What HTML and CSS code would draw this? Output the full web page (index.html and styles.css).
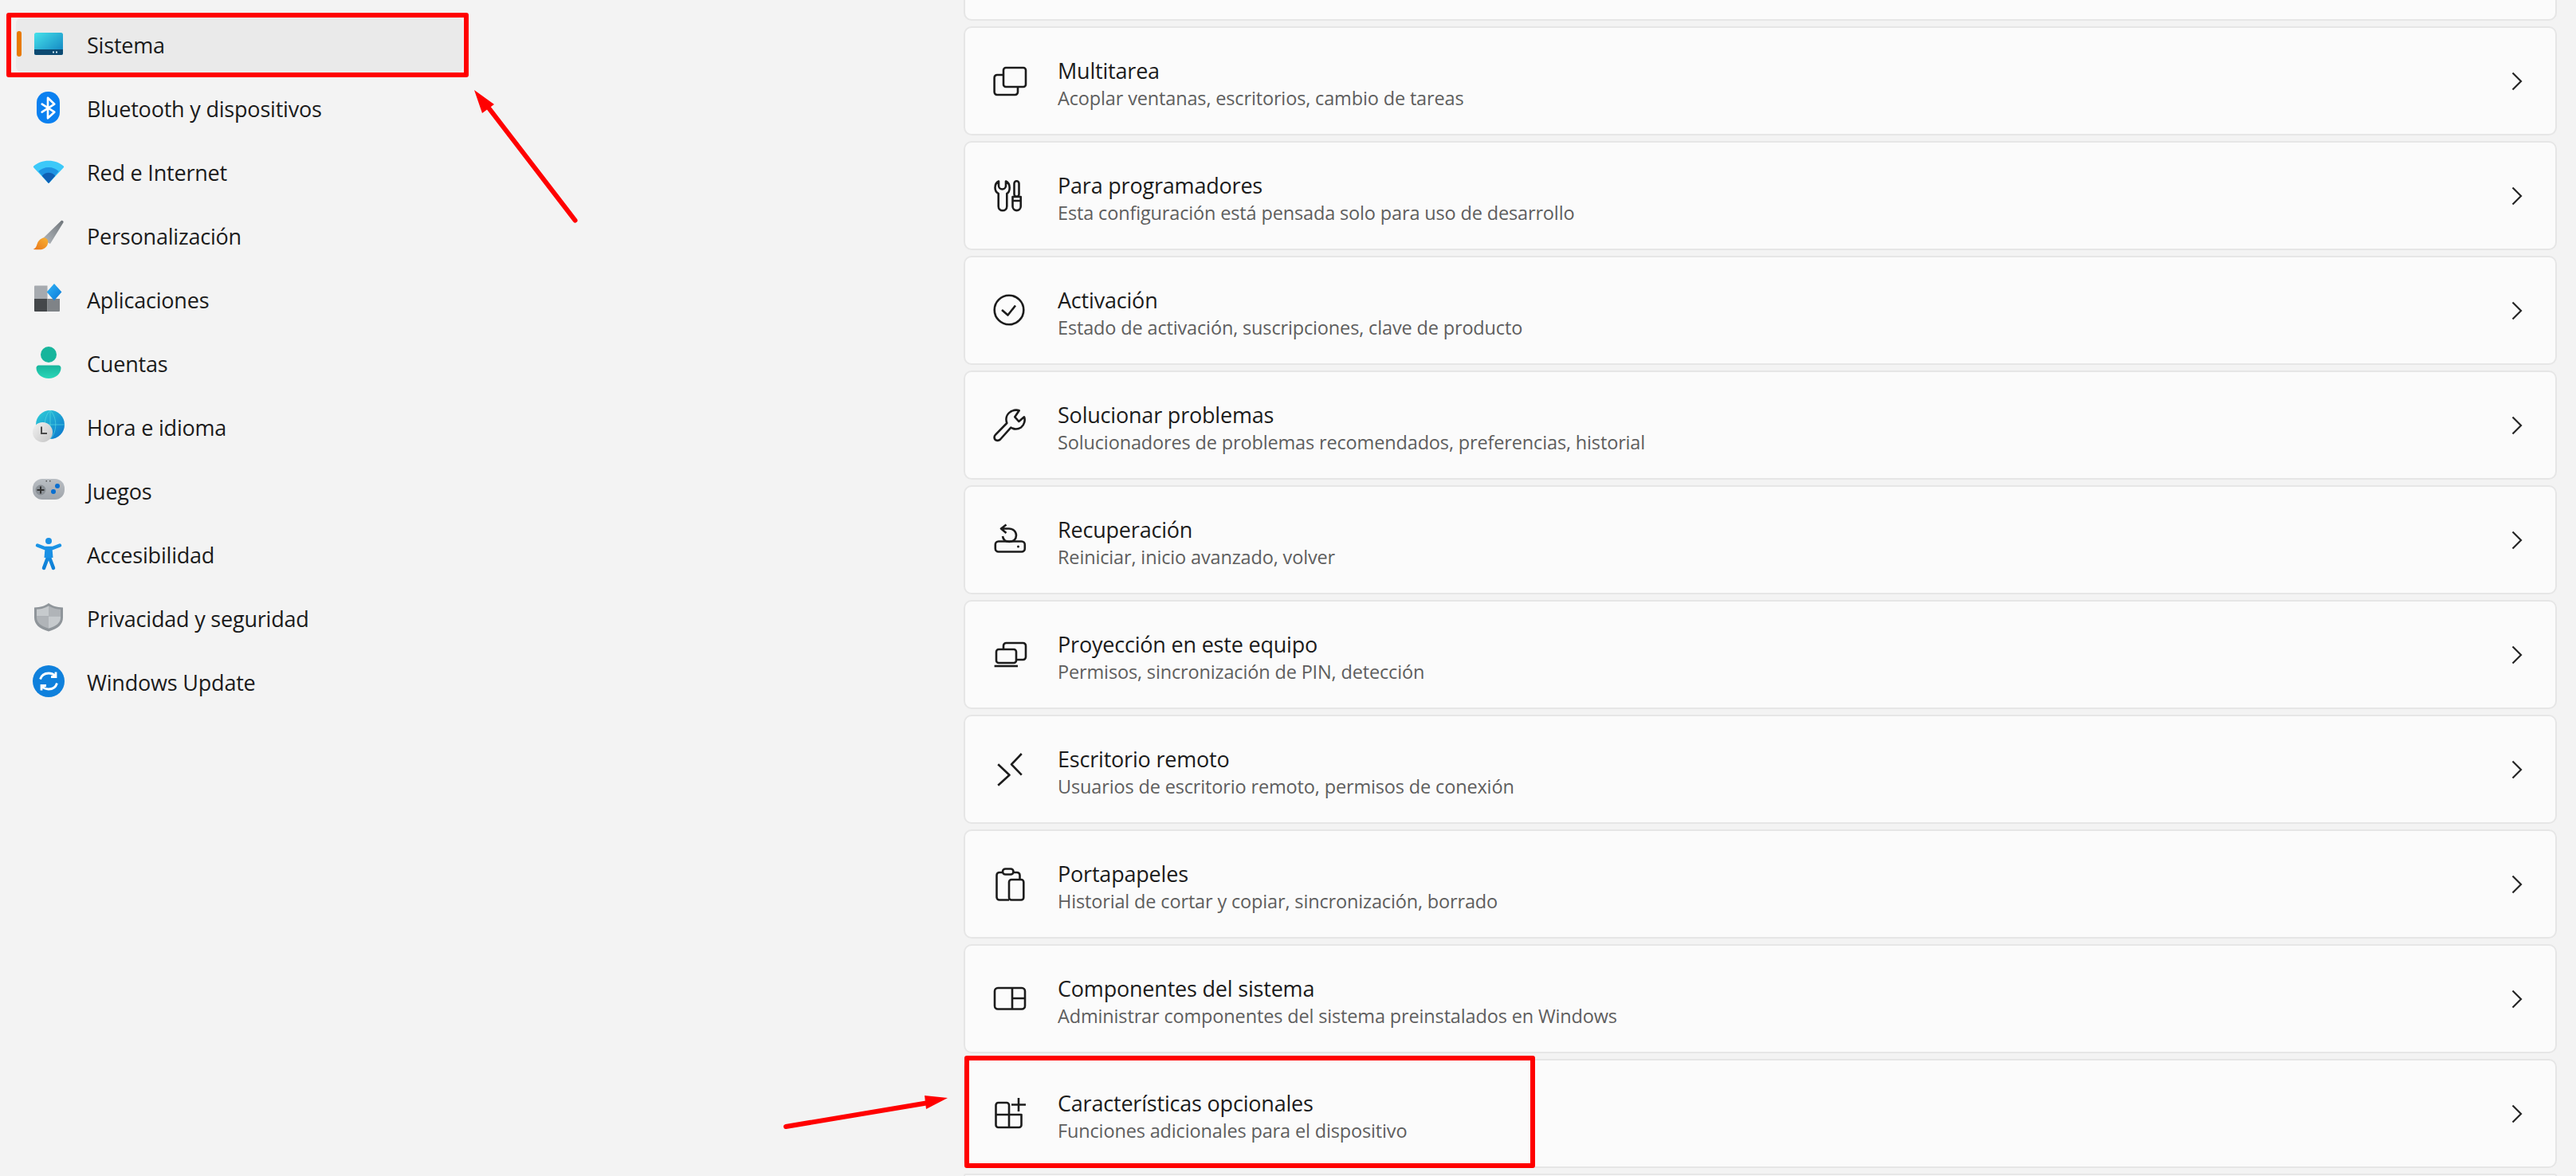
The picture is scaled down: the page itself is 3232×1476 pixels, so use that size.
FILE: index.html
```html
<!DOCTYPE html>
<html lang="es">
<head>
<meta charset="utf-8">
<title>Configuración - Sistema</title>
<link rel="stylesheet" href="styles.css">
</head>
<body>
<svg class="defs" width="0" height="0" aria-hidden="true">
  <defs>
    <linearGradient id="gSys" x1="0" y1="0" x2="1" y2="1"><stop offset="0" stop-color="#46e2ea"/><stop offset="1" stop-color="#0f7fc0"/></linearGradient>
    <linearGradient id="gTeal" x1="0" y1="0" x2="0" y2="1"><stop offset="0" stop-color="#17b59c"/><stop offset="1" stop-color="#2ad6b8"/></linearGradient>
    <linearGradient id="gGlobe" x1="0" y1="0" x2="1" y2="1"><stop offset="0" stop-color="#2fd0d8"/><stop offset="1" stop-color="#0a72cc"/></linearGradient>
    <linearGradient id="gPad" x1="0" y1="0" x2="0" y2="1"><stop offset="0" stop-color="#b9bec3"/><stop offset="1" stop-color="#a0a5ab"/></linearGradient>
    <linearGradient id="gHandle" x1="1" y1="0" x2="0" y2="1"><stop offset="0" stop-color="#6f757a"/><stop offset="1" stop-color="#b5babf"/></linearGradient>
    <linearGradient id="gBrush" x1="1" y1="0" x2="0" y2="1"><stop offset="0" stop-color="#f9b233"/><stop offset="1" stop-color="#e8751a"/></linearGradient>
    <linearGradient id="gDiamond" x1="0" y1="0" x2="1" y2="1"><stop offset="0" stop-color="#30b4f6"/><stop offset="1" stop-color="#0a78d8"/></linearGradient>
    <linearGradient id="gClock" x1="0" y1="0" x2="1" y2="1"><stop offset="0" stop-color="#f2f2f2"/><stop offset="1" stop-color="#c4c4c4"/></linearGradient>
    <linearGradient id="gBlue" x1="0" y1="0" x2="0" y2="1"><stop offset="0" stop-color="#1a94e6"/><stop offset="1" stop-color="#0f7fd6"/></linearGradient>
  </defs>
</svg>

<nav class="sidebar">
  <a class="nav-item active">
    <span class="accent"></span>
    <svg class="nav-icon" viewBox="0 0 44 44"><rect x="4" y="6" width="36" height="28" rx="2.500" fill="url(#gSys)"/><path d="M4 27h36v4.500a2.500 2.500 0 0 1-2.500 2.500h-31A2.500 2.500 0 0 1 4 31.500z" fill="#0c4a72"/><rect x="27" y="29.500" width="2" height="2" fill="#cfe6f2"/><rect x="31" y="29.500" width="2" height="2" fill="#cfe6f2"/></svg>
    <span class="nav-label">Sistema</span>
  </a>
  <a class="nav-item">
    <svg class="nav-icon" viewBox="0 0 44 44"><rect x="7" y="0" width="29" height="40" rx="14" fill="#0a80f0"/><path d="M13.700 15.700L29.300 25.700 21 33.300V7.700L29.300 15.700 13.700 25.700" fill="none" stroke="#fff" stroke-width="2.600" stroke-linejoin="round" stroke-linecap="round"/></svg>
    <span class="nav-label">Bluetooth y dispositivos</span>
  </a>
  <a class="nav-item">
    <svg class="nav-icon" viewBox="0 0 44 44"><path d="M3.200 13.500C8 9.200 14.500 6.700 22 6.700s14 2.500 18.800 6.800c.5.500.5 1.200 0 1.700L22.800 34.600c-.5.500-1.100.5-1.600 0L3.200 15.200c-.5-.5-.5-1.200 0-1.700z" fill="#3cc9f9"/><path d="M9.300 20C12.500 17 17 15 22 15s9.500 2 12.700 5L22 35z" fill="#1e93e2"/><path d="M13.700 25.700C15.800 23.200 18.700 21.700 22 21.700s6.200 1.500 8.300 4L22 35z" fill="#0f5fb4"/></svg>
    <span class="nav-label">Red e Internet</span>
  </a>
  <a class="nav-item">
    <svg class="nav-icon" viewBox="0 0 44 44"><path d="M37.500 2.200c1.300-1.300 3.800.200 3 2L24 31 13.500 25.500z" fill="url(#gHandle)"/><path d="M14 24c4-1.500 8 1.500 7.200 6-.8 5-5 8.300-10.500 8.300-3 0-5.700-.1-8-.4 3-1.200 3.800-3 4.800-6.400 1-3.500 3.200-6.300 6.500-7.500z" fill="url(#gBrush)"/></svg>
    <span class="nav-label">Personalización</span>
  </a>
  <a class="nav-item">
    <svg class="nav-icon" viewBox="0 0 44 44"><path d="M5 3.500h15.500V20H4V4.500a1 1 0 0 1 1-1z" fill="#a6aaaf"/><path d="M4 20h16.500v16H5a1 1 0 0 1-1-1z" fill="#44474a"/><path d="M20.500 20H36v15a1 1 0 0 1-1 1H20.500z" fill="#7f8387"/><path d="M29 1l9.400 10.500L29 22.300l-9.300-10.800z" fill="url(#gDiamond)"/></svg>
    <span class="nav-label">Aplicaciones</span>
  </a>
  <a class="nav-item">
    <svg class="nav-icon" viewBox="0 0 44 44"><circle cx="22" cy="10" r="10" fill="#17b59c"/><path d="M9.500 23.500h25c1.500 0 3 1.400 3 3.200 0 7.500-7 13.300-15.500 13.300S6.500 34.200 6.500 26.700c0-1.800 1.500-3.200 3-3.200z" fill="url(#gTeal)"/></svg>
    <span class="nav-label">Cuentas</span>
  </a>
  <a class="nav-item">
    <svg class="nav-icon" viewBox="0 0 44 44"><circle cx="24" cy="18" r="18" fill="url(#gGlobe)"/><path d="M6 18h36M24 0v36M24 0c-9 9-9 27 0 36M24 0c9 9 9 27 0 36" fill="none" stroke="#5fdde6" stroke-width="1" opacity=".6"/><circle cx="14.500" cy="27.500" r="12.500" fill="url(#gClock)"/><path d="M13 20.500V29h7" fill="none" stroke="#4a4a4a" stroke-width="2"/></svg>
    <span class="nav-label">Hora e idioma</span>
  </a>
  <a class="nav-item">
    <svg class="nav-icon" viewBox="0 0 44 44"><rect x="2" y="6" width="40" height="26" rx="12" fill="url(#gPad)"/><circle cx="12" cy="20" r="6.500" fill="#8a9096"/><path d="M12 15.500v9M7.500 20h9" stroke="#333" stroke-width="2"/><circle cx="33" cy="15" r="3" fill="#0a6fd0"/><circle cx="28" cy="22" r="3" fill="#0a6fd0"/><rect x="18.500" y="8" width="1.500" height="1.500" fill="#555"/><rect x="23" y="8" width="1.500" height="1.500" fill="#555"/></svg>
    <span class="nav-label">Juegos</span>
  </a>
  <a class="nav-item">
    <svg class="nav-icon" viewBox="0 0 44 44"><circle cx="22" cy="4" r="4" fill="#1a90e4"/><path d="M8 9.500l9 3.500h10l9-3.500M22 13v12M22 22l-6 16M22 22l6 16" fill="none" stroke="url(#gBlue)" stroke-width="4.500" stroke-linecap="round" stroke-linejoin="round"/><path d="M17.500 13h9l1 12h-11z" fill="#1a90e4"/></svg>
    <span class="nav-label">Accesibilidad</span>
  </a>
  <a class="nav-item">
    <svg class="nav-icon" viewBox="0 0 44 44"><path d="M22 2c4.500 3.300 10 5.300 18 5.500V20c0 8.500-6 14-18 17.500C10 34 4 28.500 4 20V7.500C12 7.300 17.500 5.300 22 2z" fill="#8f959a"/><path d="M22 5.500v13H7V9.800c6-.3 11-1.800 15-4.300z" fill="#c6cacd"/><path d="M22 5.500c4 2.500 9 4 15 4.300v8.700H22z" fill="#b0b4b8"/><path d="M7 18.500h15v15.300c-10-3-15-7.500-15-13.800z" fill="#b0b4b8"/><path d="M22 18.500h15V20c0 6.300-5 10.800-15 13.800z" fill="#c6cacd"/></svg>
    <span class="nav-label">Privacidad y seguridad</span>
  </a>
  <a class="nav-item">
    <svg class="nav-icon" viewBox="0 0 44 44"><circle cx="22" cy="20" r="20" fill="#0f80dc"/><path d="M11.500 17.500C13 12.500 17 10 22 10c3.500 0 6.500 1.300 8.500 3.800M31 8.500v6h-6M32.500 22.500C31 27.500 27 30 22 30c-3.500 0-6.500-1.300-8.500-3.800M13 31.500v-6h6" fill="none" stroke="#fff" stroke-width="2.800"/></svg>
    <span class="nav-label">Windows Update</span>
  </a>
</nav>

<main class="content">
  <div class="card card-cut"></div>

  <a class="card">
    <svg class="card-icon" viewBox="0 0 44 44"><rect x="14" y="5" width="28" height="24" rx="3" /><path d="M14 14H6a3.400 3.400 0 0 0-3.400 3.400V35.600A3.400 3.400 0 0 0 6 39h22.600a3.400 3.400 0 0 0 3.400-3.400V29"/></svg>
    <div class="card-text"><div class="card-title">Multitarea</div><div class="card-sub">Acoplar ventanas, escritorios, cambio de tareas</div></div>
    <svg class="chevron" viewBox="0 0 14 24"><path d="M1.500 1.500L12 12 1.500 22.500"/></svg>
  </a>
  <a class="card">
    <svg class="card-icon" viewBox="0 0 44 44"><path d="M8 3.500C5 5 3.500 8 3.500 11.500 3.500 15 5 17.500 7.700 19V35a5.300 5.300 0 0 0 10.600 0V19C21 17.500 21.700 15 21.700 11.500 21.700 8 20 5 17 3.500V9a4.500 4.500 0 0 1-9 0z"/><rect x="27.500" y="3.200" width="6" height="19.500" rx="3"/><path d="M25.500 23h10.200v12a5.100 5.100 0 0 1-10.200 0zM25.500 28h10.200"/></svg>
    <div class="card-text"><div class="card-title">Para programadores</div><div class="card-sub">Esta configuración está pensada solo para uso de desarrollo</div></div>
    <svg class="chevron" viewBox="0 0 14 24"><path d="M1.500 1.500L12 12 1.500 22.500"/></svg>
  </a>
  <a class="card">
    <svg class="card-icon" viewBox="0 0 44 44"><circle cx="21" cy="21" r="18.300"/><path d="M12 21l7.500 6.500L29 15.500"/></svg>
    <div class="card-text"><div class="card-title">Activación</div><div class="card-sub">Estado de activación, suscripciones, clave de producto</div></div>
    <svg class="chevron" viewBox="0 0 14 24"><path d="M1.500 1.500L12 12 1.500 22.500"/></svg>
  </a>
  <a class="card">
    <svg class="card-icon" viewBox="0 0 44 44"><path d="M4 33.700L18.300 19C16.500 14 17.500 8 23.300 4.500 26.500 2.700 30.500 2.300 33.700 3.200L28.300 11.300 33.300 17 40 11.300C41.500 15 40.500 21 36 24.500 32 27 27.500 27 23.300 24.700L10 39.500C7.500 42 3 41 2.600 37.500 2.400 36 3 34.700 4 33.700z"/></svg>
    <div class="card-text"><div class="card-title">Solucionar problemas</div><div class="card-sub">Solucionadores de problemas recomendados, preferencias, historial</div></div>
    <svg class="chevron" viewBox="0 0 14 24"><path d="M1.500 1.500L12 12 1.500 22.500"/></svg>
  </a>
  <a class="card">
    <svg class="card-icon" viewBox="0 0 44 44"><rect x="3.800" y="23.500" width="37" height="13" rx="4"/><circle cx="32.500" cy="30" r="1.500" class="dot"/><path d="M17.500 2.500L11 7.500l6.500 5.500M11 7.500h10c5 0 9 3.500 9 8.500 0 4.500-3.500 8-8.500 8s-8-3-8.500-7"/></svg>
    <div class="card-text"><div class="card-title">Recuperación</div><div class="card-sub">Reiniciar, inicio avanzado, volver</div></div>
    <svg class="chevron" viewBox="0 0 14 24"><path d="M1.500 1.500L12 12 1.500 22.500"/></svg>
  </a>
  <a class="card">
    <svg class="card-icon" viewBox="0 0 44 44"><path d="M14 14V10.500A3.500 3.500 0 0 1 17.500 7H38.500A3.500 3.500 0 0 1 42 10.500V24.500A3.500 3.500 0 0 1 38.500 28H30"/><rect x="5" y="15" width="25" height="17" rx="3"/><path d="M2.600 36h29.400"/></svg>
    <div class="card-text"><div class="card-title">Proyección en este equipo</div><div class="card-sub">Permisos, sincronización de PIN, detección</div></div>
    <svg class="chevron" viewBox="0 0 14 24"><path d="M1.500 1.500L12 12 1.500 22.500"/></svg>
  </a>
  <a class="card">
    <svg class="card-icon" viewBox="0 0 44 44"><path d="M7.200 15.300l14.300 13.400L7.200 41.700M36.800 2L24 15.300l12.800 13.400"/></svg>
    <div class="card-text"><div class="card-title">Escritorio remoto</div><div class="card-sub">Usuarios de escritorio remoto, permisos de conexión</div></div>
    <svg class="chevron" viewBox="0 0 14 24"><path d="M1.500 1.500L12 12 1.500 22.500"/></svg>
  </a>
  <a class="card">
    <svg class="card-icon" viewBox="0 0 44 44"><path d="M13 7H9A3.500 3.500 0 0 0 5.500 10.500V38A3.500 3.500 0 0 0 9 41.500h12M26.500 7H31a3.500 3.500 0 0 1 3.500 3.500V16"/><rect x="13" y="2.500" width="13.500" height="7" rx="3.500"/><rect x="21" y="16" width="18.300" height="25.500" rx="3"/></svg>
    <div class="card-text"><div class="card-title">Portapapeles</div><div class="card-sub">Historial de cortar y copiar, sincronización, borrado</div></div>
    <svg class="chevron" viewBox="0 0 14 24"><path d="M1.500 1.500L12 12 1.500 22.500"/></svg>
  </a>
  <a class="card">
    <svg class="card-icon" viewBox="0 0 44 44"><rect x="3" y="8" width="38" height="26.500" rx="4"/><path d="M25 8v26.500M25 21h16"/></svg>
    <div class="card-text"><div class="card-title">Componentes del sistema</div><div class="card-sub">Administrar componentes del sistema preinstalados en Windows</div></div>
    <svg class="chevron" viewBox="0 0 14 24"><path d="M1.500 1.500L12 12 1.500 22.500"/></svg>
  </a>
  <a class="card marked">
    <svg class="card-icon" viewBox="0 0 44 44"><path d="M21 23V11a3 3 0 0 0-3-3H7.500a3 3 0 0 0-3 3v25a3 3 0 0 0 3 3H33.500a3 3 0 0 0 3-3V23zM21 23H4.500M21 23v16M33 2v17M24 10.500h18"/></svg>
    <div class="card-text"><div class="card-title">Características opcionales</div><div class="card-sub">Funciones adicionales para el dispositivo</div></div>
    <svg class="chevron" viewBox="0 0 14 24"><path d="M1.500 1.500L12 12 1.500 22.500"/></svg>
  </a>
  <div class="card card-tail"></div>
</main>

<svg class="annotations" viewBox="0 0 3232 1476" aria-hidden="true">
  <path class="arrow-line" d="M721.500 276.500L612 134"/>
  <polygon class="arrow-head" points="595,113 620,131 605,142"/>
  <path class="arrow-line" d="M986 1414L1165 1384"/>
  <polygon class="arrow-head" points="1189,1378 1160,1375 1162,1392"/>
</svg>
</body>
</html>
```

FILE: styles.css
```css
*, *::before, *::after { box-sizing: border-box; }
html, body { margin: 0; height: 1476px; overflow: hidden; }
body {
  position: relative;
  display: flex;
  background: #f3f3f3;
  color: #1b1b1b;
  font-family: "Open Sans", "Noto Sans", sans-serif;
}
.defs { position: absolute; }

.sidebar {
  width: 1209px;
  flex: none;
  display: flex;
  flex-direction: column;
  gap: 11px;
  padding: 22px 0 0 20px;
}
.nav-item {
  position: relative;
  display: flex;
  align-items: center;
  gap: 26px;
  width: 561px;
  height: 69px;
  padding-left: 19px;
  border-radius: 8px;
}
.nav-item.active { background: #eaeaea; }
.nav-item.active::after {
  content: "";
  position: absolute;
  left: -12px;
  top: -6px;
  width: 580px;
  height: 81px;
  border: 6px solid #ff0000;
  border-radius: 3px;
}
.accent {
  position: absolute;
  left: 1px;
  top: 17px;
  width: 6px;
  height: 32px;
  border-radius: 3px;
  background: #e87a00;
}
.nav-icon { width: 44px; height: 44px; flex: none; }
.nav-label { font-size: 27px; line-height: 36px; letter-spacing: -0.2px; }

.content {
  width: 1999px;
  flex: none;
  display: flex;
  flex-direction: column;
  gap: 7px;
}
.card {
  position: relative;
  display: flex;
  align-items: center;
  flex: none;
  height: 137px;
  padding: 0 41px 0 34px;
  background: #fbfbfb;
  border: 2px solid #e6e6e6;
  border-radius: 10px;
}
.card-cut {
  height: 26px;
  border-top: 0;
  border-radius: 0 0 10px 10px;
}
.card-tail {
  height: 3px;
  border-bottom: 0;
  border-radius: 10px 10px 0 0;
}
.card.marked::after {
  content: "";
  position: absolute;
  left: -1px;
  top: -6px;
  width: 716px;
  height: 141px;
  border: 6px solid #ff0000;
  border-radius: 3px;
}
.card-icon {
  width: 44px;
  height: 44px;
  flex: none;
  fill: none;
  stroke: #1c1c1c;
  stroke-width: 2.6;
  stroke-linejoin: round;
}
.card-icon .dot { fill: #1c1c1c; stroke: none; }
.card-text { margin-left: 38px; padding-top: 7px; }
.card-title { font-size: 27px; line-height: 36px; letter-spacing: -0.2px; color: #1b1b1b; }
.card-sub { margin-top: -1px; font-size: 23.5px; line-height: 34px; letter-spacing: -0.15px; color: #5e5e5e; }
.chevron {
  width: 14px;
  height: 24px;
  margin-left: auto;
  fill: none;
  stroke: #262626;
  stroke-width: 2.2;
}

.annotations {
  position: absolute;
  left: 0;
  top: 0;
  width: 3232px;
  height: 1476px;
  pointer-events: none;
}
.arrow-line { fill: none; stroke: #ff0000; stroke-width: 6; stroke-linecap: round; }
.arrow-head { fill: #ff0000; }
```
